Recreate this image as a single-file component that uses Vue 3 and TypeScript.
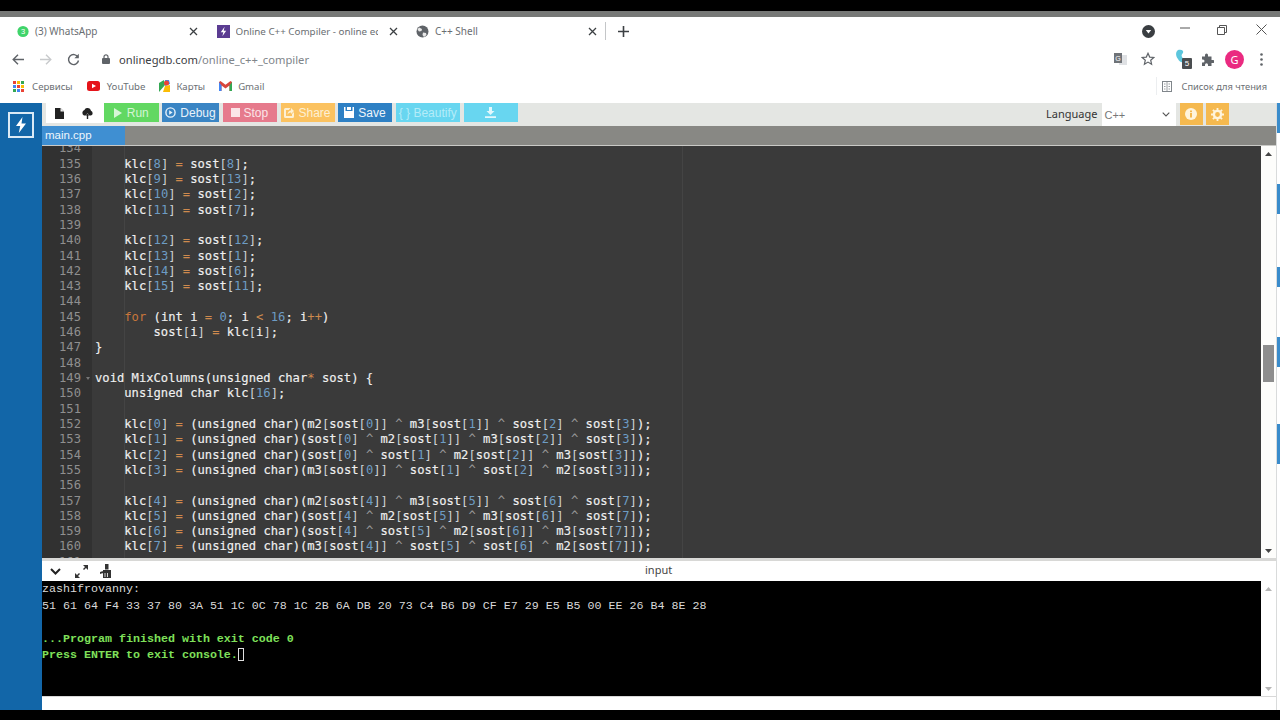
<script setup lang="ts">
type Tok = { t: string; c: string }

const source: string[] = [
  '',
  '    klc[8] = sost[8];',
  '    klc[9] = sost[13];',
  '    klc[10] = sost[2];',
  '    klc[11] = sost[7];',
  '',
  '    klc[12] = sost[12];',
  '    klc[13] = sost[1];',
  '    klc[14] = sost[6];',
  '    klc[15] = sost[11];',
  '',
  '    for (int i = 0; i < 16; i++)',
  '        sost[i] = klc[i];',
  '}',
  '',
  'void MixColumns(unsigned char* sost) {',
  '    unsigned char klc[16];',
  '',
  '    klc[0] = (unsigned char)(m2[sost[0]] ^ m3[sost[1]] ^ sost[2] ^ sost[3]);',
  '    klc[1] = (unsigned char)(sost[0] ^ m2[sost[1]] ^ m3[sost[2]] ^ sost[3]);',
  '    klc[2] = (unsigned char)(sost[0] ^ sost[1] ^ m2[sost[2]] ^ m3[sost[3]]);',
  '    klc[3] = (unsigned char)(m3[sost[0]] ^ sost[1] ^ sost[2] ^ m2[sost[3]]);',
  '',
  '    klc[4] = (unsigned char)(m2[sost[4]] ^ m3[sost[5]] ^ sost[6] ^ sost[7]);',
  '    klc[5] = (unsigned char)(sost[4] ^ m2[sost[5]] ^ m3[sost[6]] ^ sost[7]);',
  '    klc[6] = (unsigned char)(sost[4] ^ sost[5] ^ m2[sost[6]] ^ m3[sost[7]]);',
  '    klc[7] = (unsigned char)(m3[sost[4]] ^ sost[5] ^ sost[6] ^ m2[sost[7]]);',
  ''
]

function tokenize(line: string): Tok[] {
  const out: Tok[] = []
  const re = /(\bfor\b)|(\b\d+\b)|(\+\+|[=<*])|(\^)|(\[|\])/g
  let last = 0
  let m: RegExpExecArray | null
  while ((m = re.exec(line))) {
    if (m.index > last) out.push({ t: line.slice(last, m.index), c: '' })
    const c = m[1] ? 'kw' : m[2] ? 'num' : m[3] ? 'op' : m[4] ? 'car' : 'br'
    out.push({ t: m[0], c })
    last = m.index + m[0].length
  }
  if (last < line.length) out.push({ t: line.slice(last), c: '' })
  return out
}

const lines = source.map((s, i) => ({ n: 134 + i, toks: tokenize(s), fold: 134 + i === 149 }))
const patches = [
  { top: 0, h: 30 },
  { top: 51, h: 30 },
  { top: 53, h: 20 },
  { top: 50, h: 30 },
  { top: 57, h: 40 }
]
</script>

<template>
  <div class="screen">
    <div class="blackbar"></div>
    <div class="greybar"></div>

    <div class="tabrow">
      <div class="tab">
        <svg class="favi" width="12" height="13" viewBox="0 0 12 13"><circle cx="6" cy="6.5" r="5.6" fill="#3fd46a"/><text x="6" y="9.2" font-size="7.5" text-anchor="middle" fill="#fff" font-family="Liberation Sans">3</text></svg>
        <span class="tabtitle">(3) WhatsApp</span>
        <svg class="tabx" width="9" height="9" viewBox="0 0 9 9"><path d="M1 1l7 7M8 1l-7 7" stroke="#3c4043" stroke-width="1.3"/></svg>
      </div>
      <div class="tab">
        <svg class="favi" width="13" height="13" viewBox="0 0 13 13"><rect width="13" height="13" fill="#5b3c92"/><path d="M7.6 1.8L3.8 7.3h2.5L5.4 11.2l3.8-5.5H6.7z" fill="#fff"/></svg>
        <span class="tabtitle clip">Online C++ Compiler - online editor</span>
        <svg class="tabx" width="9" height="9" viewBox="0 0 9 9"><path d="M1 1l7 7M8 1l-7 7" stroke="#3c4043" stroke-width="1.3"/></svg>
      </div>
      <div class="tab">
        <svg class="favi" width="13" height="13" viewBox="0 0 13 13"><circle cx="6.5" cy="6.5" r="6" fill="#5f6368"/><path d="M3 2.5l3 1.5-.5 2-2.5.5-1.5-2zM7 7.5l3 .5.5 2L8 12l-1.5-2z" fill="#e8e8e8"/></svg>
        <span class="tabtitle">C++ Shell</span>
        <svg class="tabx" width="9" height="9" viewBox="0 0 9 9"><path d="M1 1l7 7M8 1l-7 7" stroke="#3c4043" stroke-width="1.3"/></svg>
      </div>
      <div class="tabsep"></div>
      <svg class="plus" width="11" height="11" viewBox="0 0 11 11"><path d="M5.5 0v11M0 5.5h11" stroke="#3c4043" stroke-width="1.6"/></svg>
      <div class="spring"></div>
      <svg class="wc-drop" width="13" height="13" viewBox="0 0 13 13"><circle cx="6.5" cy="6.5" r="6.5" fill="#3a3e42"/><path d="M3.8 5h5.4L6.5 8.6z" fill="#fff"/></svg>
      <svg class="wc-min" width="10" height="2" viewBox="0 0 10 2"><path d="M0 1h10" stroke="#555" stroke-width="1"/></svg>
      <svg class="wc-max" width="10" height="10" viewBox="0 0 10 10"><path d="M2.5 2V.5h7v7H8M.5 2.5h7v7h-7z" fill="none" stroke="#555"/></svg>
      <svg class="wc-close" width="11" height="11" viewBox="0 0 11 11"><path d="M.5.5l10 10M10.500.5l-10 10" stroke="#555" stroke-width="1"/></svg>
    </div>

    <div class="addrrow">
      <svg class="a-back" width="12" height="11" viewBox="0 0 12 11"><path d="M6 .8L1.200 5.500 6 10.200M1.500 5.500H12" fill="none" stroke="#5f6368" stroke-width="1.4"/></svg>
      <svg class="a-fwd" width="12" height="11" viewBox="0 0 12 11"><path d="M6 .8l4.800 4.700L6 10.200M10.500 5.500H0" fill="none" stroke="#c8cacc" stroke-width="1.400"/></svg>
      <svg class="a-rel" width="13" height="13" viewBox="0 0 13 13"><path d="M11 4.200A5 5 0 1 0 11.500 7.500" fill="none" stroke="#5f6368" stroke-width="1.400"/><path d="M11.800.8v4.400H7.400z" fill="#5f6368"/></svg>
      <svg class="a-lock" width="8" height="10" viewBox="0 0 8 10"><rect y="4" width="8" height="6" rx="1" fill="#5f6368"/><path d="M2 4.500V2.800a2 2 0 0 1 4 0v1.700" fill="none" stroke="#5f6368" stroke-width="1.200"/></svg>
      <span class="url"><b>onlinegdb.com</b>/online_c++_compiler</span>
      <div class="spring"></div>
      <svg class="a-tr" width="13" height="14" viewBox="0 0 13 14"><rect x="5" y="3" width="8" height="10" fill="#dfe1e4"/><rect width="8" height="10" y="1" fill="#6f7378"/><text x="4" y="9" font-size="7" text-anchor="middle" fill="#fff" font-family="Liberation Sans">G</text></svg>
      <svg class="a-star" width="14" height="14" viewBox="0 0 14 14"><path d="M7 1.300l1.700 3.800 4.100.4-3.100 2.700.9 4L7 10.100l-3.600 2.100.9-4L1.200 5.500l4.100-.4z" fill="none" stroke="#5f6368" stroke-width="1.200"/></svg>
      <div class="ext">
        <svg width="14" height="16" viewBox="0 0 14 16"><path d="M4 1c4-1 6 1 5 3-1 1-2 2-1 4 1 1 2 3 2 5-3 1-5-1-6-3C2 8 1 3 4 1z" fill="#5cc6dd"/></svg>
        <span class="badge">5</span>
      </div>
      <svg class="a-puz" width="13" height="13" viewBox="0 0 13 13"><path d="M1 3.500h3V2a1.500 1.500 0 0 1 3 0v1.500h3.500V7H12a1.500 1.500 0 0 1 0 3h-1.500v3H7v-1.300a1.500 1.500 0 0 0-3 0V13H1V9.500h1a1.500 1.500 0 0 0 0-3H1z" fill="#5f6368"/></svg>
      <div class="avatar">G</div>
      <svg class="a-dots" width="3" height="13" viewBox="0 0 3 13"><circle cx="1.500" cy="1.500" r="1.300" fill="#5f6368"/><circle cx="1.500" cy="6.500" r="1.300" fill="#5f6368"/><circle cx="1.500" cy="11.500" r="1.300" fill="#5f6368"/></svg>
    </div>

    <div class="bookrow">
      <svg class="b-grid" width="11" height="11" viewBox="0 0 11 11"><g><rect width="3" height="3" fill="#ea4335"/><rect x="4" width="3" height="3" fill="#fbbc05"/><rect x="8" width="3" height="3" fill="#34a853"/><rect y="4" width="3" height="3" fill="#4285f4"/><rect x="4" y="4" width="3" height="3" fill="#ea4335"/><rect x="8" y="4" width="3" height="3" fill="#fbbc05"/><rect y="8" width="3" height="3" fill="#34a853"/><rect x="4" y="8" width="3" height="3" fill="#4285f4"/><rect x="8" y="8" width="3" height="3" fill="#ea4335"/></g></svg>
      <span class="blabel l1">Сервисы</span>
      <svg class="b-yt" width="13" height="10" viewBox="0 0 13 10"><rect width="13" height="10" rx="2.500" fill="#e5141a"/><path d="M5 2.800v4.400L9 5z" fill="#fff"/></svg>
      <span class="blabel l2">YouTube</span>
      <svg class="b-map" width="11" height="13" viewBox="0 0 11 13"><path d="M0 3l5-3 1 5-6 7z" fill="#34a853"/><path d="M6 0h4l1 4-5 2z" fill="#4285f4"/><path d="M6 6l5-1v7H4z" fill="#fbbc05"/><circle cx="7.500" cy="3" r="2.500" fill="#ea4335"/></svg>
      <span class="blabel l3">Карты</span>
      <svg class="b-gm" width="13" height="10" viewBox="0 0 13 10"><path d="M0 1v9h2.500V4.500L6.500 7.500l4-3V10H13V1l-1.500-1-5 3.800-5-3.800z" fill="#d8463c"/><path d="M0 1v9h2.500V4.500z" fill="#4285f4"/><path d="M13 1v9h-2.500V4.500z" fill="#34a853"/></svg>
      <span class="blabel l4">Gmail</span>
      <div class="spring"></div>
      <div class="bsep"></div>
      <svg class="b-rl" width="10" height="11" viewBox="0 0 10 11"><rect x=".5" y=".5" width="9" height="10" fill="none" stroke="#80868b"/><path d="M5 .5v10M2 3h1.500M2 5.500h1.500M2 8h1.500M6.500 3H8M6.500 5.500H8M6.500 8H8" stroke="#80868b" stroke-width=".8"/></svg>
      <span class="blabel l5">Список для чтения</span>
    </div>

    <div class="app">
      <aside class="side">
        <div class="logo">
          <svg width="12" height="16" viewBox="0 0 12 16"><path d="M7.500 0L1 9h4.200L3.800 16 11 6.500H6.500z" fill="#fff"/></svg>
        </div>
      </aside>

      <main class="main">
        <div class="toolbar">
          <div class="filebtns">
            <svg class="ic-file" width="9" height="11" viewBox="0 0 9 11"><path d="M0 0h5.500L9 3.500V11H0z" fill="#222"/><path d="M5.500 0v3.500H9" fill="#eee"/></svg>
            <svg class="ic-up" width="13" height="11" viewBox="0 0 13 11"><path d="M3 7.500a3 3 0 0 1 .4-5.500A3.500 3.500 0 0 1 10 2.800a2.500 2.500 0 0 1 0 4.700H8.500L6.500 5l-2 2.500z" fill="#222"/><path d="M4.500 7.500h1.300V11h1.400V7.500h1.300L6.500 5.200z" fill="#222"/></svg>
          </div>
          <button class="btn run">
            <svg width="8" height="10" viewBox="0 0 8 10"><path d="M0 0l8 5-8 5z" fill="#d8f6d8"/></svg>
            <span>Run</span>
          </button>
          <button class="btn debug">
            <svg width="11" height="11" viewBox="0 0 11 11"><circle cx="5.500" cy="5.500" r="4.600" fill="none" stroke="#e8f2fa" stroke-width="1.400"/><path d="M4.200 3.200v4.600l3.400-2.300z" fill="#e8f2fa"/></svg>
            <span>Debug</span>
          </button>
          <button class="btn stop">
            <svg width="9" height="9" viewBox="0 0 9 9"><rect width="9" height="9" fill="#fbe5e8"/></svg>
            <span>Stop</span>
          </button>
          <button class="btn share">
            <svg width="10" height="10" viewBox="0 0 10 10"><path d="M1.500 0h5L4.800 2H2v6h6V6l2-2v4.500A1.500 1.500 0 0 1 8.500 10h-7A1.500 1.500 0 0 1 0 8.500v-7A1.500 1.500 0 0 1 1.500 0zM7 0l3 3-3 3V4.500C5 4.500 4 5.500 3.500 7c0-3 1.500-4.500 3.500-4.500z" fill="#fdf0d4"/></svg>
            <span>Share</span>
          </button>
          <button class="btn save">
            <svg width="10" height="11" viewBox="0 0 10 11"><path d="M0 0h1.500v4h7V0H10v11H0z" fill="#fff"/><rect x="3" y="0" width="4" height="3" fill="#fff"/></svg>
            <span>Save</span>
          </button>
          <button class="btn beaut"><span>{ } Beautify</span></button>
          <button class="btn down">
            <svg width="11" height="11" viewBox="0 0 11 11"><path d="M4 0h3v4h2.500l-4 4-4-4H4zM0 9.300h11V11H0z" fill="#e2f8fd"/></svg>
          </button>
          <div class="spring"></div>
          <span class="langlabel">Language</span>
          <div class="select">
            <span>C++</span>
            <svg width="8" height="5" viewBox="0 0 8 5"><path d="M.7.7L4 4l3.300-3.300" fill="none" stroke="#555" stroke-width="1.100"/></svg>
          </div>
          <button class="mini">
            <svg width="12" height="12" viewBox="0 0 12 12"><circle cx="6" cy="6" r="6" fill="#fff4dc"/><rect x="5" y="5" width="2" height="4.500" fill="#f5b94f"/><rect x="5" y="2.500" width="2" height="1.700" fill="#f5b94f"/></svg>
          </button>
          <button class="mini">
            <svg width="13" height="13" viewBox="0 0 13 13"><circle cx="6.500" cy="6.500" r="3.600" fill="none" stroke="#fff4dc" stroke-width="2.400"/><path d="M6.500 0v13M0 6.500h13M1.900 1.900l9.200 9.200M11.100 1.900l-9.200 9.200" stroke="#fff4dc" stroke-width="1.800" stroke-dasharray="2.200 8.600 2.200 0"/></svg>
          </button>
        </div>

        <div class="tabbar"><div class="filetab">main.cpp</div></div>
        <div class="tabline"></div>

        <div class="editorrow">
          <div class="editor">
            <div class="printmargin"></div>
            <div class="indentguide"></div>
            <div class="lines">
              <div v-for="l in lines" :key="l.n" class="line">
                <span class="gut">{{ l.n }}<i v-if="l.fold" class="fold"></i></span>
                <span class="code"><span v-for="(k, i) in l.toks" :key="i" :class="k.c">{{ k.t }}</span></span>
              </div>
            </div>
          </div>
          <div class="vscroll">
            <svg class="arr-up" width="7" height="4" viewBox="0 0 7 4"><path d="M3.500 0L7 4H0z" fill="#444"/></svg>
            <div class="thumb"></div>
            <div class="spring"></div>
            <svg class="arr-dn" width="7" height="4" viewBox="0 0 7 4"><path d="M3.500 4L7 0H0z" fill="#444"/></svg>
          </div>
        </div>

        <div class="splitter"></div>

        <div class="inputbar">
          <svg class="i-chev" width="11" height="7" viewBox="0 0 11 7"><path d="M1 1l4.500 4.500L10 1" fill="none" stroke="#222" stroke-width="2"/></svg>
          <svg class="i-exp" width="13" height="13" viewBox="0 0 13 13"><path d="M8 0h5v5L11 3 9 5 8 4l2-2zM5 13H0V8l2 2 2-2 1 1-2 2z" fill="#333"/></svg>
          <svg class="i-clr" width="11" height="14" viewBox="0 0 11 14"><path d="M5 0h3.500v5.500H5zM3 6h8v8H3zM0 8l3-1v2L0 10z" fill="#333"/><path d="M5 9v4M7.500 9v4" stroke="#fff" stroke-width=".8"/></svg>
          <span class="inputlabel">input</span>
        </div>

        <div class="consolerow">
          <div class="console">
            <div>zashifrovanny:</div>
            <div>51 61 64 F4 33 37 80 3A 51 1C 0C 78 1C 2B 6A DB 20 73 C4 B6 D9 CF E7 29 E5 B5 00 EE 26 B4 8E 28</div>
            <div>&nbsp;</div>
            <div class="green">...Program finished with exit code 0</div>
            <div class="green">Press ENTER to exit console.<span class="cursor"></span></div>
          </div>
          <div class="cscroll">
            <svg width="7" height="4" viewBox="0 0 7 4"><path d="M3.500 0L7 4H0z" fill="#b5b5b5"/></svg>
            <svg width="7" height="4" viewBox="0 0 7 4"><path d="M3.500 4L7 0H0z" fill="#b5b5b5"/></svg>
          </div>
        </div>
        <div class="footer"></div>
      </main>

      <div class="strip">
        <div v-for="(p, i) in patches" :key="i" class="patch" :style="{ marginTop: p.top + 'px', height: p.h + 'px' }"></div>
      </div>
    </div>
    <div class="blackfoot"></div>
  </div>
</template>

<style>
html, body { margin: 0; background: #000; }
</style>

<style scoped>
.screen { width: 1280px; height: 720px; overflow: hidden; display: flex; flex-direction: column; background: #fff; font-family: "Liberation Sans", Arial, sans-serif; }
.blackbar { height: 11px; background: #000; flex: none; }
.greybar { height: 6px; background: #767876; flex: none; }
.spring { flex: 1; }

.tabrow { height: 28px; flex: none; display: flex; align-items: center; padding-left: 11px; background: #fff; }
.tab { width: 199.5px; height: 28px; box-sizing: border-box; padding-left: 6px; display: flex; align-items: center; position: relative; flex: none; }
.favi { flex: none; }
.tabtitle { margin-left: 6px; font: 10px "Noto Sans", sans-serif; color: #6a6e72; white-space: nowrap; }
.clip { width: 142px; overflow: hidden; font-size: 9.8px; }
.tabx { position: absolute; left: 178px; top: 10px; }
.tabsep { width: 1px; height: 18px; background: #c4c6c8; margin-left: -5px; flex: none; }
.plus { margin-left: 12px; flex: none; }
.wc-drop { margin-right: 25px; }
.wc-min { margin-right: 27px; margin-bottom: 6px; }
.wc-max { margin-right: 29px; margin-bottom: 3px; }
.wc-close { margin-right: 13px; margin-bottom: 4px; }

.addrrow { height: 30px; flex: none; display: flex; align-items: center; background: #fff; padding-left: 12px; margin-top: -1px; }
.a-fwd { margin-left: 16px; }
.a-rel { margin-left: 15px; }
.a-lock { margin-left: 22px; }
.url { margin-left: 9px; font: 11.2px "Noto Sans", sans-serif; color: #80858a; white-space: nowrap; }
.url b { font-weight: 400; color: #3c4043; }
.a-tr { margin-right: 14px; }
.a-star { margin-right: 19px; }
.ext { position: relative; width: 20px; height: 20px; margin-right: 7px; flex: none; }
.ext svg { position: absolute; left: 0; top: 0; }
.badge { position: absolute; left: 8px; top: 9px; width: 10px; height: 11px; background: #4a4d50; color: #fff; font: 8px/11px "Liberation Sans"; text-align: center; border-radius: 1px; }
.a-puz { margin-right: 11px; }
.avatar { width: 19px; height: 19px; border-radius: 50%; background: #ea2a80; color: #fff; font: 11px/19px "Noto Sans", sans-serif; text-align: center; margin-right: 16px; flex: none; }
.a-dots { margin-right: 17px; }

.bookrow { height: 29px; flex: none; display: flex; align-items: center; background: #fff; padding: 0 0 5px 13px; box-sizing: border-box; }
.blabel { font: 9.6px "Noto Sans", sans-serif; color: #6b6f73; white-space: nowrap; }
.l1 { margin-left: 8px; }
.b-yt { margin-left: 14px; }
.l2 { margin-left: 7px; }
.b-map { margin-left: 14px; }
.l3 { margin-left: 6px; }
.b-gm { margin-left: 14px; }
.l4 { margin-left: 6px; }
.bsep { width: 1px; height: 18px; background: #eceef0; margin-right: 5px; }
.l5 { margin-left: 9px; margin-right: 13px; font-size: 9.3px; }

.app { height: 607px; flex: none; display: flex; }
.side { width: 42px; flex: none; background: #1266a8; }
.logo { width: 26px; height: 26px; box-sizing: border-box; margin: 9px 0 0 8px; border: 2.5px solid #dbeaf5; display: flex; align-items: center; justify-content: center; }

.main { width: 1233.5px; flex: none; display: flex; flex-direction: column; }
.toolbar { height: 23px; flex: none; background: #e4e6e3; display: flex; align-items: flex-start; padding-left: 4px; box-sizing: border-box; }
.filebtns { width: 58px; height: 20px; background: #fff; display: flex; align-items: center; flex: none; }
.ic-file { margin-left: 9px; }
.ic-up { margin-left: 17px; }
.btn { height: 19px; margin: 0 3.5px 0 0; border: 0; padding: 0; display: flex; align-items: center; justify-content: center; gap: 5px; font: 12px "Liberation Sans", Arial, sans-serif; flex: none; }
.run { width: 54.5px; background: #62d862; color: #d4f5d4; }
.debug { width: 57px; background: #3a85c4; color: #e8f2fa; gap: 4px; }
.stop { width: 54.500px; background: #e67a8c; color: #fbe5e8; gap: 3px; }
.share { width: 54px; background: #fbc260; color: #fdf0d4; gap: 4px; }
.save { width: 54px; background: #2e80c4; color: #f0f6fb; gap: 4px; }
.beaut { width: 64.500px; background: #68d6f0; color: #b4ecf8; }
.down { width: 54.500px; background: #68d6f0; }
.langlabel { font: 11px/22px "Noto Sans", sans-serif; color: #333; margin-right: 4px; }
.select { width: 74px; height: 23px; background: #fff; display: flex; align-items: center; justify-content: space-between; padding: 0 6px 0 3px; box-sizing: border-box; font: 11px "Liberation Sans", sans-serif; color: #777; margin-right: 4px; flex: none; }
.mini { width: 23px; height: 22px; border: 0; padding: 0; background: #f5b94f; margin-right: 3px; display: flex; align-items: center; justify-content: center; flex: none; }
.mini:last-child { margin-right: 47px; }

.tabbar { height: 19px; flex: none; background: #888884; display: flex; }
.filetab { width: 83px; background: #3f8fd2; color: #eef6fc; font: 11.5px/19px "Liberation Sans", sans-serif; padding-left: 3px; box-sizing: border-box; }
.tabline { height: 1px; flex: none; background: #c9c9c6; }

.editorrow { height: 412px; flex: none; display: flex; }
.editor { width: 1219px; flex: none; background: #3a3a3a; overflow: hidden; position: relative; }
.printmargin { position: absolute; left: 640px; top: 0; bottom: 0; width: 1px; background: #444; }
.indentguide { position: absolute; left: 82px; top: 0; bottom: 0; width: 1px; background: #444; }
.lines { margin-top: -4.700px; font: 12.160px/15.320px "DejaVu Sans Mono", monospace; }
.line { height: 15.320px; display: flex; white-space: pre; }
.gut { width: 50px; height: 15.320px; flex: none; background: #313131; color: #8f8f8f; box-sizing: border-box; padding-right: 11px; text-align: right; position: relative; }
.fold { position: absolute; left: 44px; top: 6px; width: 0; height: 0; border-left: 2.500px solid transparent; border-right: 2.500px solid transparent; border-top: 3px solid #777; }
.code { margin-left: 3px; color: #f0f0f0; -webkit-text-stroke: 0.15px #f0f0f0; }
.kw { color: #c8763a; -webkit-text-stroke: 0; }
.num { color: #6d9cc4; -webkit-text-stroke: 0; }
.op { color: #cf8a4e; -webkit-text-stroke: 0; }
.car { color: #9a9a9a; -webkit-text-stroke: 0; }
.br { color: #cfd3d6; -webkit-text-stroke: 0; }

.vscroll { width: 14.500px; flex: none; background: #fdfdfb; display: flex; flex-direction: column; align-items: center; }
.arr-up { margin-top: 6px; flex: none; }
.thumb { width: 11px; height: 37px; background: #8e8e8e; margin-top: 189px; flex: none; }
.arr-dn { margin-bottom: 5px; flex: none; }

.splitter { height: 3px; flex: none; background: #d8d8d6; }
.inputbar { height: 20px; flex: none; background: #fff; display: flex; align-items: center; position: relative; }
.i-chev { margin-left: 8px; }
.i-exp { margin-left: 14px; }
.i-clr { margin-left: 12px; }
.inputlabel { position: absolute; left: 603px; top: 1px; font: 11px "Noto Sans", sans-serif; color: #444; }

.consolerow { height: 115px; flex: none; display: flex; background: #fff; }
.console { width: 1219px; flex: none; background: #000; color: #d9d9d9; font: 11.670px/16.600px "Liberation Mono", monospace; white-space: pre; }
.green { color: #7fe05a; font-weight: 700; }
.cursor { display: inline-block; width: 6px; height: 13px; border: 1px solid #e0e0e0; vertical-align: -3px; box-sizing: border-box; }
.cscroll { width: 14.500px; flex: none; display: flex; flex-direction: column; align-items: center; justify-content: space-between; padding: 6px 0 5px; box-sizing: border-box; }
.footer { height: 14px; flex: none; background: #fff; border-top: 1px solid #d8d8d8; box-sizing: border-box; }

.strip { width: 4.500px; flex: none; background: #fff; border-left: 1px solid #d9dbdb; box-sizing: border-box; }
.patch { background: #3a8ccb; }
.blackfoot { height: 10px; flex: none; background: #000; }
</style>
